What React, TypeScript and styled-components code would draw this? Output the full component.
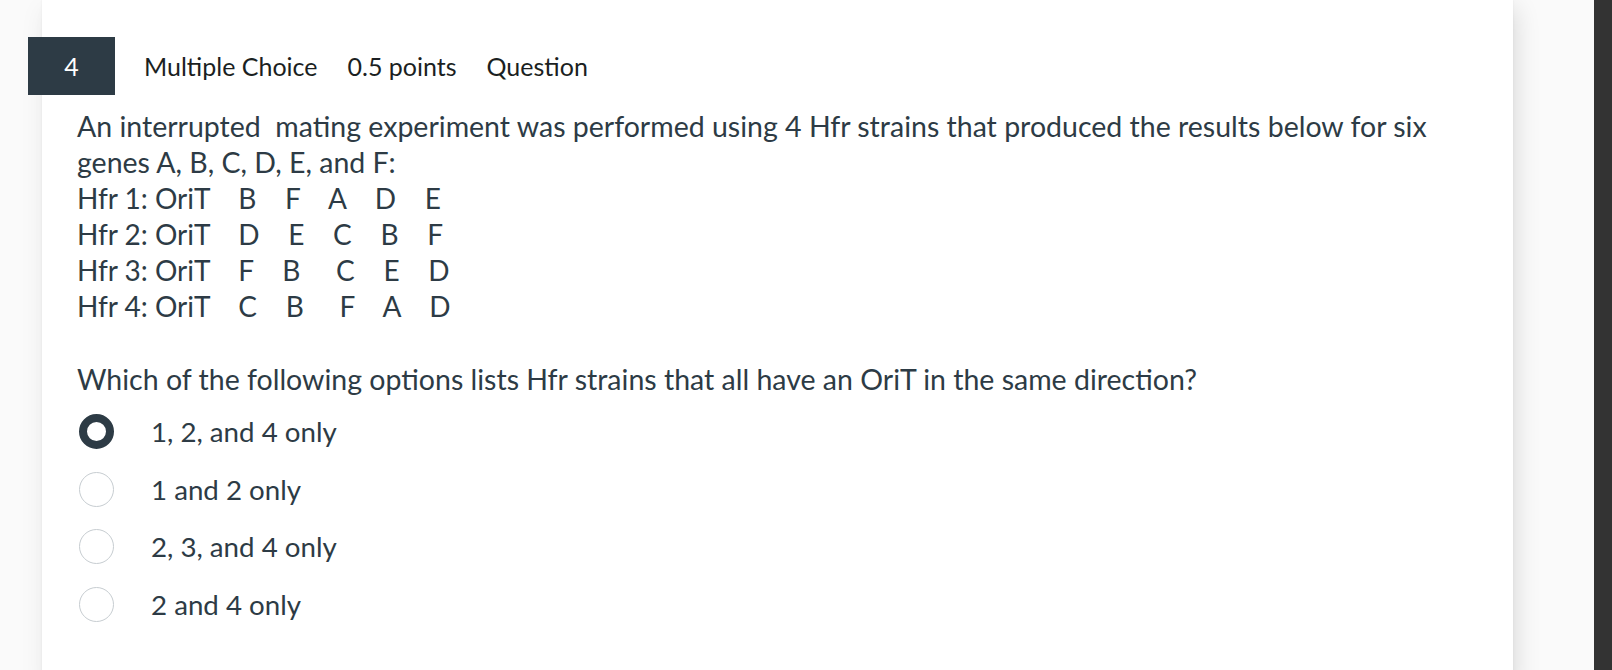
import styled, { createGlobalStyle } from 'styled-components';

const GlobalStyle = createGlobalStyle`
  html, body {
    margin: 0;
    padding: 0;
    background: #fafafa;
  }
  body {
    font-family: Lato, "Open Sans", sans-serif;
    color: #2d3b45;
  }
`;

const Screen = styled.div`
  display: flex;
  height: 670px;
  overflow: hidden;
`;

const Stage = styled.div`
  flex: 1;
  padding-left: 42px;
  background: #fafafa;
`;

const ScrollTrack = styled.div`
  width: 18px;
  background: #333333;
`;

const Card = styled.div`
  width: 1471px;
  min-height: 700px;
  box-sizing: border-box;
  background: #ffffff;
  padding: 37px 35px 0 35px;
  box-shadow: 0 0 2px rgba(0, 0, 0, 0.06), 10px 0 24px -8px rgba(0, 0, 0, 0.14),
    -8px 0 24px -8px rgba(0, 0, 0, 0.06);
`;

const Header = styled.div`
  display: flex;
  align-items: center;
  margin-left: -49px;
  gap: 30px;
`;

const Badge = styled.div`
  width: 87px;
  height: 58px;
  margin-right: -1px;
  background: #2d3b45;
  color: #ffffff;
  display: flex;
  align-items: center;
  justify-content: center;
  font-size: 25px;
`;

const Meta = styled.span`
  font-size: 25px;
  color: #1b1f22;
`;

const Body = styled.div`
  margin-top: 13px;
  line-height: 36.1px;
  font-size: 28.5px;
`;

const Para = styled.p<{ $size?: number }>`
  margin: 0;
  font-size: ${(p) => (p.$size ? `${p.$size}px` : 'inherit')};
  white-space: pre-wrap;
`;

const Prompt = styled.p`
  margin: 36.3px 0 0 0;
`;

const Options = styled.div`
  display: flex;
  flex-direction: column;
  gap: 22px;
  margin-top: 17px;
  padding-left: 2px;
`;

const Option = styled.label`
  display: flex;
  align-items: center;
  gap: 37px;
  font-size: 27.7px;
  height: 35.5px;
`;

const Radio = styled.span<{ $checked?: boolean }>`
  width: 35px;
  height: 35px;
  box-sizing: border-box;
  border-radius: 50%;
  flex-shrink: 0;
  background: #ffffff;
  border: ${(p) => (p.$checked ? '8px solid #2d3b45' : '1.5px solid #c7cdd1')};
`;

const strains = [
  'Hfr 1: OriT    B    F    A    D    E',
  'Hfr 2: OriT    D    E    C    B    F',
  'Hfr 3: OriT    F    B     C    E    D',
  'Hfr 4: OriT    C    B     F    A    D',
];

const answers = ['1, 2, and 4 only', '1 and 2 only', '2, 3, and 4 only', '2 and 4 only'];

export default function App() {
  return (
    <>
      <GlobalStyle />
      <Screen>
        <Stage>
          <Card>
            <Header>
              <Badge>4</Badge>
              <Meta>Multiple Choice</Meta>
              <Meta>0.5 points</Meta>
              <Meta>Question</Meta>
            </Header>
            <Body>
              <Para>
                {'An interrupted  mating experiment was performed using 4 Hfr strains that produced the results below for six genes A, B, C, D, E, and F:'}
              </Para>
              {strains.map((s) => (
                <Para key={s} $size={28}>
                  {s}
                </Para>
              ))}
              <Prompt>
                Which of the following options lists Hfr strains that all have an OriT in the same direction?
              </Prompt>
            </Body>
            <Options>
              {answers.map((a, i) => (
                <Option key={a}>
                  <Radio $checked={i === 0} />
                  {a}
                </Option>
              ))}
            </Options>
          </Card>
        </Stage>
        <ScrollTrack />
      </Screen>
    </>
  );
}
